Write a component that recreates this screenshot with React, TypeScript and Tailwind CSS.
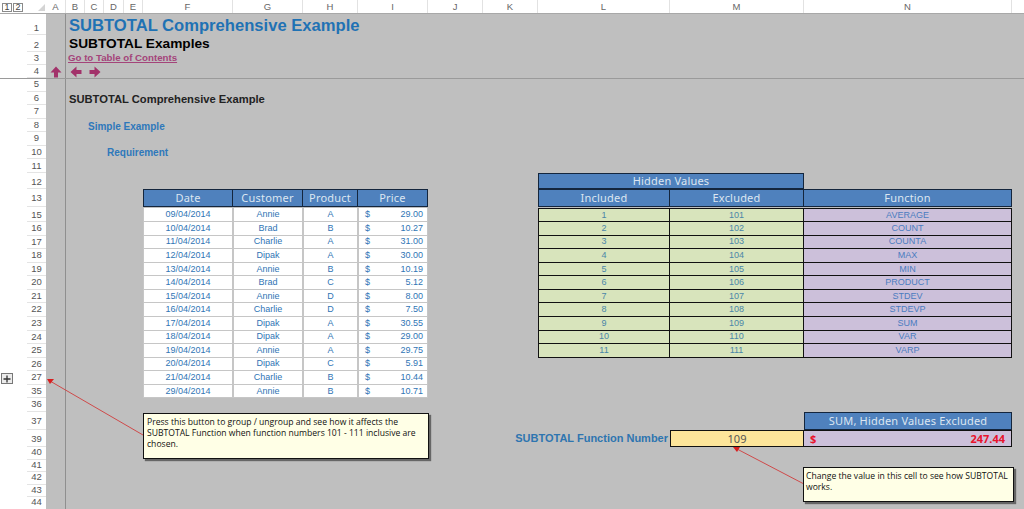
const grid = "grid h-full grid-rows-[minmax(0,1fr)] grid-cols-[27px_19px_20px_19px_19px_20px_19px_90px_70px_55px_70px_55px_55px_132px_134px_208px_1fr]";
const arial = "font-['Liberation_Sans',Arial,sans-serif]";
const cal = "font-['Noto_Sans',sans-serif]";

const colHeads = ["A","B","C","D","E","F","G","H","I","J","K","L","M","N"];
const hCell = "flex items-center justify-center border-t border-b border-r border-[#14263d] bg-[#4f81bd] pb-[1px] text-[11px] leading-none tracking-[0.2px] text-[#dce6f1] " + cal;
const tData = [
  ["09/04/2014","Annie","A","29.00"],["10/04/2014","Brad","B","10.27"],["11/04/2014","Charlie","A","31.00"],
  ["12/04/2014","Dipak","A","30.00"],["13/04/2014","Annie","B","10.19"],["14/04/2014","Brad","C","5.12"],
  ["15/04/2014","Annie","D","8.00"],["16/04/2014","Charlie","D","7.50"],["17/04/2014","Dipak","A","30.55"],
  ["18/04/2014","Dipak","A","29.00"],["19/04/2014","Annie","A","29.75"],["20/04/2014","Dipak","C","5.91"],
  ["21/04/2014","Charlie","B","10.44"],["29/04/2014","Annie","B","10.71"],
];
const fns = ["AVERAGE","COUNT","COUNTA","MAX","MIN","PRODUCT","STDEV","STDEVP","SUM","VAR","VARP"];
const wCell = "flex items-center justify-center border-x border-b border-[#c6c6c6] bg-white text-[9px] leading-none text-[#2f75b5] " + arial;
const gCell = "flex items-center justify-center border-b border-r border-[#111] text-[9px] leading-none " + arial;

function Row({ n, h, line, children }: { n: string; h: number; line?: boolean; children?: React.ReactNode }) {
  const numAlign = h === 18 ? "items-center" : "items-end pb-[2px]";
  return (
    <div style={{ height: h }} className={line ? "relative border-b border-[#9a9a9a]" : "relative"}>
      <div className={grid}>
        <div className="col-start-1 row-start-1 bg-white" />
        <div className={"col-start-2 row-start-1 flex justify-center border-b border-[#e4e4e4] bg-white text-[9.5px] leading-none text-[#555] " + numAlign + " " + arial}>{n}</div>
        <div className="col-start-3 row-start-1 border-r border-[#8f8f8f]" />
        {children}
      </div>
    </div>
  );
}

function BlockArrow({ dir }: { dir: "up" | "left" | "right" }) {
  const rot = dir === "up" ? "rotate-0" : dir === "left" ? "-rotate-90" : "rotate-90";
  return (
    <svg viewBox="0 0 12 12" className={"h-[12px] w-[12px] " + rot}>
      <path d="M6 .5 L11.5 6.5 H8 V11.5 H4 V6.5 H.5 Z" fill="#a2326a" />
    </svg>
  );
}

export default function App() {
  return (
    <div className={"relative h-[509px] w-[1024px] overflow-hidden bg-[#bfbfbf] " + arial}>
      {/* column header */}
      <div className="h-[14px] border-b border-[#a8a8a8] bg-white">
        <div className={grid}>
          <div className="col-start-1 row-start-1 flex items-center gap-px pl-[2px] pt-px">
            <span className="flex h-[9px] w-[10px] items-center justify-center border border-[#8a8a8a] text-[9px] leading-none text-[#444]">1</span>
            <span className="flex h-[9px] w-[10px] items-center justify-center border border-[#8a8a8a] text-[9px] leading-none text-[#444]">2</span>
          </div>
          <div className="col-start-2 row-start-1 flex items-end justify-end pb-[2px] pr-[1px]">
            <svg viewBox="0 0 7 7" className="h-[7px] w-[7px]"><path d="M7 0V7H0Z" fill="#d4d4d4" /></svg>
          </div>
          {colHeads.map((c, i) => (
            <div key={c} className={"flex items-center justify-center border-r border-[#e2e2e2] text-[9.5px] leading-none text-[#666] " + (i === 0 ? "col-start-3 row-start-1" : "row-start-1")}>{c}</div>
          ))}
        </div>
      </div>

      <Row n="1" h={21}>
        <div className="col-start-4 row-start-1 flex items-center whitespace-nowrap pl-[3px] pt-[3px] text-[16.6px] font-bold leading-none text-[#1f72b4]">SUBTOTAL Comprehensive Example</div>
      </Row>
      <Row n="2" h={17}>
        <div className="col-start-4 row-start-1 flex items-center whitespace-nowrap pl-[3px] pt-[1px] text-[13.7px] font-bold leading-none text-black">SUBTOTAL Examples</div>
      </Row>
      <Row n="3" h={13}>
        <div className="col-start-4 row-start-1 flex items-center whitespace-nowrap pb-[1px] pl-[2px] text-[9.7px] font-bold leading-none text-[#a4447a] underline">Go to Table of Contents</div>
      </Row>
      <Row n="4" h={14} line>
        <div className="col-start-3 row-start-1 flex items-center justify-center pt-px"><BlockArrow dir="up" /></div>
        <div className="col-start-4 row-start-1 flex items-center justify-center pl-[1px]"><BlockArrow dir="left" /></div>
        <div className="col-start-5 row-start-1 flex items-center justify-center"><BlockArrow dir="right" /></div>
      </Row>
      <Row n="5" h={12.5} />
      <Row n="6" h={13.6}>
        <div className="col-start-4 row-start-1 flex items-center whitespace-nowrap pl-[3px] pt-[3px] text-[11.2px] font-bold leading-none text-[#222]">SUBTOTAL Comprehensive Example</div>
      </Row>
      <Row n="7" h={13.5} />
      <Row n="8" h={13.5}>
        <div className="col-start-5 row-start-1 flex items-center whitespace-nowrap pl-[3px] pt-[3px] text-[10px] font-bold leading-none text-[#2e78bb]">Simple Example</div>
      </Row>
      <Row n="9" h={13.5} />
      <Row n="10" h={13.5}>
        <div className="col-start-6 row-start-1 flex items-center whitespace-nowrap pl-[3px] pt-[1px] text-[10px] font-bold leading-none text-[#2e78bb]">Requirement</div>
      </Row>
      <Row n="11" h={14.4} />
      <Row n="12" h={16}>
        <div className={"col-span-2 col-start-14 row-start-1 border-l " + hCell}>Hidden Values</div>
      </Row>
      <Row n="13" h={18}>
        <div className={"col-start-8 row-start-1 border-l " + hCell}>Date</div>
        <div className={"col-start-9 row-start-1 " + hCell}>Customer</div>
        <div className={"col-start-10 row-start-1 " + hCell}>Product</div>
        <div className={"col-start-11 row-start-1 " + hCell}>Price</div>
        <div className={"col-start-14 row-start-1 border-l " + hCell}>Included</div>
        <div className={"col-start-15 row-start-1 " + hCell}>Excluded</div>
        <div className={"col-start-16 row-start-1 " + hCell}>Function</div>
      </Row>
      <Row n="" h={1} />
      {tData.map((r, i) => (
        <Row key={i} n={["15","16","17","18","19","20","21","22","23","24","25","26","27","35"][i]} h={13.57}>
          <div className={"col-start-8 row-start-1 " + wCell}>{r[0]}</div>
          <div className={"col-start-9 row-start-1 " + wCell}>{r[1]}</div>
          <div className={"col-start-10 row-start-1 " + wCell}>{r[2]}</div>
          <div className={"col-start-11 row-start-1 !justify-between px-[6px] pr-[4px] " + wCell}><span>$</span><span>{r[3]}</span></div>
          {i < 11 && (
            <>
              <div className={"col-start-14 row-start-1 border-l bg-[#d8e4bc] text-[#4a86a8] " + (i === 0 ? "border-t " : "") + gCell}>{i + 1}</div>
              <div className={"col-start-15 row-start-1 bg-[#d8e4bc] text-[#4a86a8] " + (i === 0 ? "border-t " : "") + gCell}>{101 + i}</div>
              <div className={"col-start-16 row-start-1 bg-[#ccc0da] text-[#4b7cc0] " + (i === 0 ? "border-t " : "") + gCell}>{fns[i]}</div>
            </>
          )}
        </Row>
      ))}
      <Row n="36" h={13.5} />
      <Row n="37" h={18}>
        <div className={"col-start-16 row-start-1 border-l " + hCell}>SUM, Hidden Values Excluded</div>
      </Row>
      <Row n="39" h={17}>
        <div className="col-span-2 col-start-13 row-start-1 flex items-center justify-end whitespace-nowrap pr-[2px] text-[11px] font-bold leading-none text-[#2e75b0]">SUBTOTAL Function Number</div>
        <div className={"col-start-15 row-start-1 flex items-center justify-center border border-[#111] bg-[#fde59a] text-[11px] leading-none text-[#555] " + cal}>109</div>
        <div className={"col-start-16 row-start-1 flex items-center justify-between border-y border-r border-[#111] bg-[#ccc0da] pl-[6px] pr-[6px] text-[11px] font-bold leading-none text-[#e8132c] " + cal}>
          <span>$</span><span>247.44</span>
        </div>
      </Row>
      <Row n="40" h={13} />
      <Row n="41" h={12.5} />
      <Row n="42" h={12.5} />
      <Row n="43" h={12.5} />
      <Row n="44" h={12.5} />

      {/* outline expand button */}
      <div className="absolute left-[1px] top-[373px] flex h-[11px] w-[12px] items-center justify-center border border-[#777] bg-[#ececec]">
        <svg viewBox="0 0 8 8" className="h-[8px] w-[8px]"><path d="M4 0.5V7.5M0.5 4H7.5" stroke="#333" strokeWidth="1.3" /></svg>
      </div>

      {/* arrows */}
      <svg className="absolute left-0 top-0 h-[509px] w-[1024px]" viewBox="0 0 1024 509">
        <path d="M143 435 L50 381" stroke="#cf4a4a" strokeWidth="1" fill="none" />
        <path d="M47 379 H54 L50 384 Z" fill="#d81e1e" />
        <path d="M804 484 L737 449" stroke="#cf4a4a" strokeWidth="1" fill="none" />
        <path d="M733 447 H740 L737 452 Z" fill="#d81e1e" />
      </svg>

      {/* callouts */}
      <div className={"absolute left-[143px] top-[413px] h-[46px] w-[286px] border border-[#111] bg-[#ffffe6] px-[3px] pt-[3px] text-[8.6px] leading-[11px] text-[#111] shadow-[2px_2px_1px_#666] font-['Open_Sans',sans-serif]"}>
        Press this button to group / ungroup and see how it affects the SUBTOTAL Function when function numbers 101 - 111 inclusive are chosen.
      </div>
      <div className={"absolute left-[803px] top-[467px] h-[35px] w-[211px] whitespace-nowrap border border-[#111] bg-[#ffffe6] px-[2px] pt-[3px] text-[8.6px] leading-[11px] text-[#111] shadow-[2px_2px_1px_#666] font-['Open_Sans',sans-serif]"}>
        Change the value in this cell to see how SUBTOTAL<br />works.
      </div>
    </div>
  );
}
